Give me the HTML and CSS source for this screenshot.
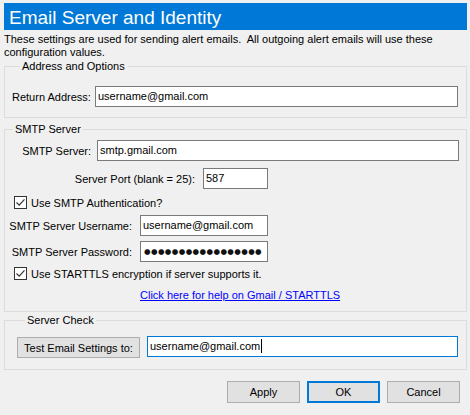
FILE: index.html
```html
<!DOCTYPE html>
<html lang="en">
<head>
<meta charset="utf-8">
<title>Email Server and Identity</title>
<link rel="stylesheet" href="styles.css">
</head>
<body>
<div class="window">
  <div class="titlebar">Email Server and Identity</div>
  <p class="intro">These settings are used for sending alert emails.&nbsp; All outgoing alert emails will use these configuration values.</p>

  <fieldset class="group group-address">
    <legend>Address and Options</legend>
    <div class="row row-return">
      <span class="label label-return">Return Address:</span>
      <div class="textbox grow">username@gmail.com</div>
    </div>
  </fieldset>

  <fieldset class="group group-smtp">
    <legend>SMTP Server</legend>
    <div class="row row-server">
      <span class="label label-server">SMTP Server:</span>
      <div class="textbox grow">smtp.gmail.com</div>
    </div>
    <div class="row row-port">
      <span class="label label-port">Server Port (blank = 25):</span>
      <div class="textbox port">587</div>
    </div>
    <div class="check row-auth">
      <svg class="box" width="13" height="13" viewBox="0 0 13 13"><rect x="0.5" y="0.5" width="12" height="12" fill="#fff" stroke="#333"/><polyline points="2.5,6.5 5.2,9.2 10.5,3.4" fill="none" stroke="#333" stroke-width="1.2"/></svg>
      <span>Use SMTP Authentication?</span>
    </div>
    <div class="row row-user">
      <span class="label label-user">SMTP Server Username:</span>
      <div class="textbox cred">username@gmail.com</div>
    </div>
    <div class="row row-pass">
      <span class="label label-user">SMTP Server Password:</span>
      <div class="textbox cred dots">●●●●●●●●●●●●●●●●●</div>
    </div>
    <div class="check row-tls">
      <svg class="box" width="13" height="13" viewBox="0 0 13 13"><rect x="0.5" y="0.5" width="12" height="12" fill="#fff" stroke="#333"/><polyline points="2.5,6.5 5.2,9.2 10.5,3.4" fill="none" stroke="#333" stroke-width="1.2"/></svg>
      <span>Use STARTTLS encryption if server supports it.</span>
    </div>
    <a class="help" href="#">Click here for help on Gmail / STARTTLS</a>
  </fieldset>

  <fieldset class="group group-check">
    <legend>Server Check</legend>
    <div class="row row-test">
      <button class="btn test">Test Email Settings to:</button>
      <div class="textbox grow focused">username@gmail.com<span class="caret"></span></div>
    </div>
  </fieldset>

  <div class="footer">
    <button class="btn">Apply</button>
    <button class="btn default">OK</button>
    <button class="btn">Cancel</button>
  </div>
</div>
</body>
</html>
```

FILE: styles.css
```css
html, body {
  margin: 0;
  padding: 0;
  background: #f0f0f0;
}

body {
  font-family: "Liberation Sans", Arial, sans-serif;
  font-size: 11px;
  color: #000;
}

.window {
  width: 470px;
  box-sizing: border-box;
  padding: 3px 3px 0 4px;
}

.titlebar {
  background: #0078d7;
  color: #fff;
  font-size: 19px;
  height: 27px;
  box-sizing: border-box;
  padding: 2px 0 0 5px;
  line-height: 25px;
}

.intro {
  margin: 3px 0 0 0;
  line-height: 13px;
}

.group {
  margin: 0;
  padding: 0;
  border: 1px solid #dcdcdc;
  min-inline-size: 0;
}

.group legend {
  margin-left: 8px;
  padding: 0 2px;
  line-height: 13px;
}

.group-address { margin-top: 1px; padding: 13px 8px 10px 7px; }
.group-smtp { margin-top: 5px; padding: 0 7px 9px 0; }
.group-check { margin-top: 2px; padding: 9px 8px 11px 12px; }

.row {
  display: flex;
  align-items: center;
}

.label {
  flex: none;
  box-sizing: border-box;
  white-space: nowrap;
}

.label-return { width: 83px; }
.label-server { width: 92px; text-align: right; padding-right: 6px; }
.label-port { width: 198px; text-align: right; padding-right: 8px; }
.label-user { width: 135px; text-align: right; padding-right: 8px; }

.row-server { margin-top: 4px; }
.row-port { margin-top: 7px; }
.row-user { margin-top: 5px; }
.row-pass { margin-top: 5px; }

.textbox {
  box-sizing: border-box;
  height: 21px;
  line-height: 19px;
  border: 1px solid #7a7a7a;
  background: #fff;
  padding: 0 2px;
  white-space: nowrap;
  overflow: hidden;
}

.grow { flex: 1; }
.port { width: 65px; }
.cred { width: 128px; }

.dots {
  font-family: "DejaVu Sans", sans-serif;
  font-size: 7.5px;
  letter-spacing: 0.4px;
  padding-left: 3px;
  color: #111;
}

.focused { border-color: #0078d7; }

.caret {
  display: inline-block;
  width: 1px;
  height: 14px;
  background: #000;
  vertical-align: -3px;
  margin-left: 1px;
}

.check {
  display: flex;
  align-items: center;
  height: 15px;
  padding-left: 9px;
  gap: 4px;
}

.check .box { flex: none; }

.row-auth { margin-top: 6px; }
.row-tls { margin-top: 4px; }

.help {
  display: block;
  width: max-content;
  margin: 8px 0 0 135px;
  line-height: 13px;
  color: #0000ff;
  text-decoration: underline;
}

.btn {
  font-family: "Liberation Sans", Arial, sans-serif;
  font-size: 11px;
  color: #000;
  background: #e1e1e1;
  border: 1px solid #adadad;
  margin: 0;
  padding: 0;
  box-sizing: border-box;
}

.row-test { align-items: flex-start; gap: 7px; }

.test {
  width: 123px;
  height: 21px;
  margin-top: 1px;
  flex: none;
}

.footer {
  display: flex;
  justify-content: flex-end;
  gap: 7px;
  margin-top: 11px;
  padding-right: 7px;
}

.footer .btn {
  width: 73px;
  height: 22px;
}

.footer .default {
  border: 2px solid #0078d7;
}
```
